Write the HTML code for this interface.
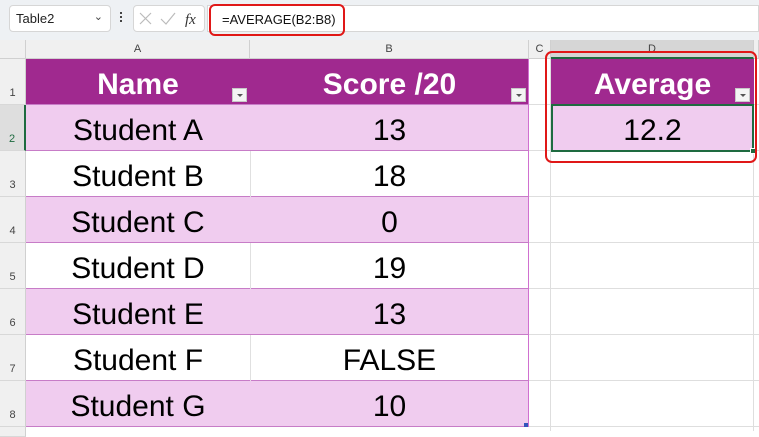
<!DOCTYPE html><html><head><style>
*{margin:0;padding:0;box-sizing:border-box}
body{width:759px;height:431px;overflow:hidden;background:#fff;font-family:"Liberation Sans",Arial,sans-serif;position:relative}
.a{position:absolute}
.rh{position:absolute;left:0;width:26px;background:#f0f0f0;border-right:1px solid #d0d0d0;border-bottom:1px solid #d8d8d8;font-size:11px;color:#444;display:flex;align-items:flex-end;justify-content:center;padding-bottom:5px}
.ch{position:absolute;top:40px;height:19px;background:#f0f0f0;border-right:1px solid #d0d0d0;border-bottom:1px solid #d0d0d0;font-size:11px;color:#444;text-align:center;line-height:19px}
.c{position:absolute;display:flex;align-items:center;justify-content:center;font-size:30px;color:#000;border-bottom:1px solid #c77cc7;padding-top:6px}
.p{background:#f0ccef}
.h{background:#a0298f;color:#fff;font-weight:bold;font-size:30px}
.dd{position:absolute;width:15px;height:14px;background:#f4f4f4;border:1px solid #c8c8c8}
.dd:after{content:"";position:absolute;left:4px;top:5px;border-left:3px solid transparent;border-right:3px solid transparent;border-top:3px solid #555}
.g{position:absolute;background:#dedede}
</style></head><body>
<div class="a" style="left:0;top:0;width:759px;height:40px;background:#eef1f4"></div>
<div class="a" style="left:9px;top:5px;width:102px;height:27px;background:#fff;border:1px solid #d6d6d6;border-radius:4px;font-size:13px;line-height:25px;padding-left:6px;color:#222">Table2<span style="position:absolute;right:7px;top:-1px;font-size:11px;color:#444">&#8964;</span></div>
<div class="a" style="left:120px;top:12px;width:2px;height:2px;background:#444;box-shadow:0 4px #444,0 8px #444"></div>
<div class="a" style="left:133px;top:5px;width:72px;height:27px;background:#fff;border:1px solid #d6d6d6;border-radius:4px"></div>
<svg class="a" style="left:137px;top:10px" width="70" height="18"><path d="M3 3L14 14M14 3L3 14" stroke="#bbb" stroke-width="1.2"/><path d="M24 9L29 14L38 3" stroke="#bbb" stroke-width="1.2" fill="none"/><text x="48" y="14" font-family="Liberation Serif" font-style="italic" font-size="15" fill="#333">fx</text></svg>
<div class="a" style="left:207px;top:5px;width:552px;height:27px;background:#fff;border:1px solid #d6d6d6"></div>
<div class="a" style="left:209px;top:4px;width:136px;height:32px;border:2px solid #e01818;border-radius:6px;font-size:13px;line-height:28px;padding-left:11px;color:#111">=AVERAGE(B2:B8)</div>
<div class="a" style="left:0;top:40px;width:26px;height:19px;background:#f0f0f0;border-right:1px solid #d0d0d0;border-bottom:1px solid #d0d0d0"></div>
<div class="ch" style="left:26px;width:224px">A</div>
<div class="ch" style="left:250px;width:279px">B</div>
<div class="ch" style="left:529px;width:22px">C</div>
<div class="ch" style="left:551px;width:203px;background:#d6d6d6;border-bottom:2px solid #1e6b40">D</div>
<div class="ch" style="left:754px;width:5px"></div>
<div class="rh" style="top:59px;height:46px">1</div>
<div class="rh" style="top:105px;height:46px;background:#dedede;color:#1e6b40;border-right:2px solid #1e6b40">2</div>
<div class="rh" style="top:151px;height:46px">3</div>
<div class="rh" style="top:197px;height:46px">4</div>
<div class="rh" style="top:243px;height:46px">5</div>
<div class="rh" style="top:289px;height:46px">6</div>
<div class="rh" style="top:335px;height:46px">7</div>
<div class="rh" style="top:381px;height:46px">8</div>
<div class="rh" style="top:427px;height:10px"></div>
<div class="g" style="left:550px;top:59px;width:1px;height:372px"></div>
<div class="g" style="left:753px;top:59px;width:1px;height:372px"></div>
<div class="g" style="left:529px;top:104px;width:230px;height:1px"></div>
<div class="g" style="left:529px;top:150px;width:230px;height:1px"></div>
<div class="g" style="left:529px;top:196px;width:230px;height:1px"></div>
<div class="g" style="left:529px;top:242px;width:230px;height:1px"></div>
<div class="g" style="left:529px;top:288px;width:230px;height:1px"></div>
<div class="g" style="left:529px;top:334px;width:230px;height:1px"></div>
<div class="g" style="left:529px;top:380px;width:230px;height:1px"></div>
<div class="g" style="left:26px;top:426px;width:733px;height:1px"></div>
<div class="c h" style="left:26px;top:59px;width:224px;height:46px">Name</div>
<div class="c h" style="left:250px;top:59px;width:279px;height:46px">Score /20</div>
<div class="dd" style="left:232px;top:88px"></div>
<div class="dd" style="left:511px;top:88px"></div>
<div class="c p" style="left:26px;top:105px;width:224px;height:46px">Student A</div>
<div class="c p" style="left:250px;top:105px;width:279px;height:46px">13</div>
<div class="c" style="left:26px;top:151px;width:224px;height:46px">Student B</div>
<div class="c" style="left:250px;top:151px;width:279px;height:46px">18</div>
<div class="c p" style="left:26px;top:197px;width:224px;height:46px">Student C</div>
<div class="c p" style="left:250px;top:197px;width:279px;height:46px">0</div>
<div class="c" style="left:26px;top:243px;width:224px;height:46px">Student D</div>
<div class="c" style="left:250px;top:243px;width:279px;height:46px">19</div>
<div class="c p" style="left:26px;top:289px;width:224px;height:46px">Student E</div>
<div class="c p" style="left:250px;top:289px;width:279px;height:46px">13</div>
<div class="c" style="left:26px;top:335px;width:224px;height:46px">Student F</div>
<div class="c" style="left:250px;top:335px;width:279px;height:46px">FALSE</div>
<div class="c p" style="left:26px;top:381px;width:224px;height:46px">Student G</div>
<div class="c p" style="left:250px;top:381px;width:279px;height:46px">10</div>
<div class="a" style="left:250px;top:151px;width:1px;height:46px;background:#e0e0e0"></div>
<div class="a" style="left:250px;top:243px;width:1px;height:46px;background:#e0e0e0"></div>
<div class="a" style="left:250px;top:335px;width:1px;height:46px;background:#e0e0e0"></div>
<div class="a" style="left:528px;top:59px;width:1px;height:368px;background:#d070d0"></div>
<div class="a" style="left:524px;top:423px;width:4px;height:4px;background:#3355bb"></div>
<div class="c h" style="left:551px;top:59px;width:203px;height:46px;border:none">Average</div>
<div class="dd" style="left:735px;top:88px"></div>
<div class="c p" style="left:551px;top:104px;width:203px;height:48px;border:2px solid #1e6b40">12.2</div>
<div class="a" style="left:750px;top:148px;width:6px;height:6px;background:#1e6b40;border:1px solid #fff"></div>
<div class="a" style="left:545px;top:51px;width:212px;height:112px;border:2px solid #e01818;border-radius:7px"></div>
</body></html>
